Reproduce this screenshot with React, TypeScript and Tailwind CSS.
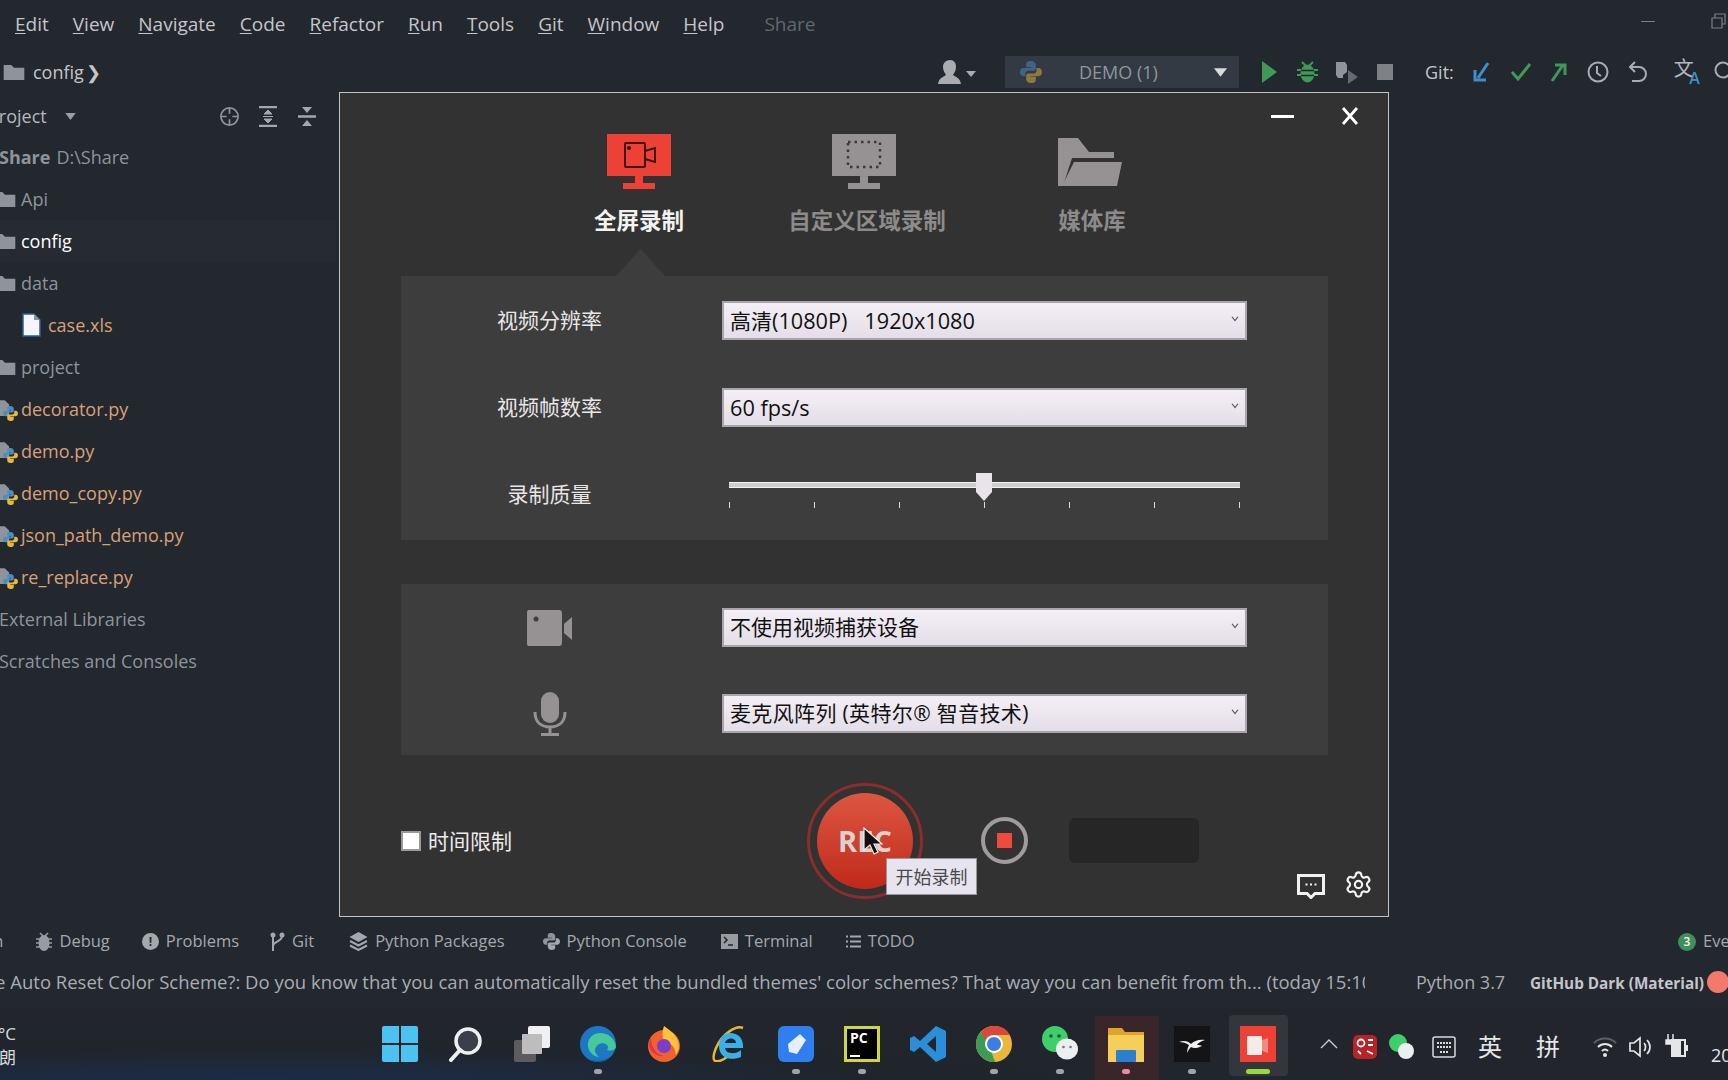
import { Settings } from "lucide-react";

const MENU = ["Edit", "View", "Navigate", "Code", "Refactor", "Run", "Tools", "Git", "Window", "Help"];

const PY_FILES = ["decorator.py", "demo.py", "demo_copy.py", "json_path_demo.py", "re_replace.py"];

function FolderIcon({ className }: { className?: string }) {
  return (
    <svg viewBox="0 0 22 16" className={className}>
      <path d="M0 0h8l3 3h11v13H0z" fill="#8f949c" />
    </svg>
  );
}

function PyLogo({ size = 14 }: { size?: number }) {
  return (
    <svg viewBox="0 0 16 16" width={size} height={size}>
      <path d="M8 0C4.500 0 4.500 1.500 4.500 3v1.500H8.300V5H2.500C1 5 0 6.300 0 8s1 3 2.500 3H4V9c0-1.200 1-2 2-2h4c1 0 1.500-.8 1.500-1.600V3C11.500 1.200 10 0 8 0z" fill="#4a8fc4" />
      <path d="M8 16c3.500 0 3.500-1.500 3.500-3v-1.500H7.700V11h5.800c1.500 0 2.500-1.300 2.500-3s-1-3-2.500-3H12v2c0 1.200-1 2-2 2H6c-1 0-1.500.8-1.500 1.600V13c0 1.800 1.500 3 3.500 3z" fill="#e6b93a" />
    </svg>
  );
}

function PyFileIcon() {
  return (
    <span className="relative ml-[-4px] block h-[24px] w-[25px] shrink-0">
      <svg viewBox="0 0 16 22" className="h-[22px] w-[14px]">
        <path d="M0 2h10l5 5v13H0z" fill="#8d949c" />
      </svg>
      <span className="absolute bottom-0 right-[3px]">
        <PyLogo size={15} />
      </span>
    </span>
  );
}

function TreeRow({ children, active }: { children: React.ReactNode; active?: boolean }) {
  return <div className={`flex h-[42px] items-center text-[18px] ${active ? "bg-[#262a31] text-white" : "text-[#8e949b]"}`}>{children}</div>;
}

function Select({ children }: { children: React.ReactNode }) {
  return (
    <div className="flex h-[39px] items-center justify-between border-2 border-[#a9a5ab] bg-gradient-to-b from-[#f4eef6] to-[#e4dee8] pl-[6px] pr-[6px] text-[21px] leading-none text-[#111]">
      <span className="whitespace-pre">{children}</span>
      <svg viewBox="0 0 10 8" className="mb-[3px] h-[6px] w-[8px]">
        <path d="M1 1l4 5 4-5" fill="none" stroke="#555" strokeWidth="1.600" />
      </svg>
    </div>
  );
}

function ScreenIcon({ active }: { active?: boolean }) {
  const fill = active ? "#ec4134" : "#969293";
  return (
    <svg viewBox="0 0 64 55" className="h-[55px] w-[64px]">
      <path d="M0 0h64v42H0z M28 42h8v8h-8z M16 49h32v6H16z" fill={fill} />
      {active ? (
        <g fill="none" stroke="#3d1512" strokeWidth="2">
          <rect x="18" y="9" width="20" height="24" rx="1" />
          <path d="M38 17l10-3v14l-10-3" />
          <circle cx="22" cy="14" r="1" fill="#3d1512" />
        </g>
      ) : (
        <rect x="16" y="8" width="32" height="25" fill="none" stroke="#3a3838" strokeWidth="2.500" strokeDasharray="2.500 4" />
      )}
    </svg>
  );
}

function OpenFolderIcon() {
  return (
    <svg viewBox="0 0 64 48" className="h-[48px] w-[64px]">
      <path d="M0 0h20l11 14h25v6H14L5 48H0z" fill="#969293" />
      <path d="M16 24h48l-5 24H4z" fill="#969293" />
    </svg>
  );
}

function Tab({ label, active, children }: { label: string; active?: boolean; children: React.ReactNode }) {
  return (
    <div className="flex flex-col items-center">
      <div className="flex h-[55px] items-center">{children}</div>
      <div className={`mt-[17px] text-[22.5px] leading-[30px] ${active ? "font-bold text-[#f2f2f2]" : "font-semibold text-[#8c8a8a]"}`}>{label}</div>
    </div>
  );
}

function Dialog() {
  return (
    <div className="absolute left-[339px] top-[92px] flex h-[825px] w-[1050px] flex-col border border-[#bfc4c6] bg-[#333232] pl-[61px]">
      <div className="flex h-[41px] items-center justify-end pr-[29px] pt-[5px]">
        <div className="h-[3px] w-[23px] bg-white" />
        <svg viewBox="0 0 18 18" className="ml-[47px] h-[18px] w-[18px]">
          <path d="M2 1l14 16M16 1L2 17" stroke="#fff" strokeWidth="2.800" />
        </svg>
      </div>

      <div className="ml-[124px] flex">
        <div className="w-[228px]">
          <Tab label="全屏录制" active>
            <ScreenIcon active />
          </Tab>
        </div>
        <div className="w-[228px]">
          <Tab label="自定义区域录制">
            <div className="pr-[6px]">
              <ScreenIcon />
            </div>
          </Tab>
        </div>
        <div className="w-[222px]">
          <Tab label="媒体库">
            <div className="pr-[5px]">
              <OpenFolderIcon />
            </div>
          </Tab>
        </div>
      </div>

      <div className="relative mt-[40px] h-[264px] w-[927px] bg-[#3e3d3e] pt-[25px]">
        <div className="absolute -top-[27px] left-[215px] h-[27px] w-[49px] bg-[#3e3d3e] [clip-path:polygon(50%_0,100%_100%,0_100%)]" />
        <div className="grid grid-cols-[321px_525px] items-center">
          <div className="pr-[24px] text-center text-[21px] text-[#e8e6e6]">视频分辨率</div>
          <Select>
            高清<span className="text-[21.7px]">(1080P)   1920x1080</span>
          </Select>
        </div>
        <div className="mt-[48px] grid grid-cols-[321px_525px] items-center">
          <div className="pr-[24px] text-center text-[21px] text-[#e8e6e6]">视频帧数率</div>
          <Select>
            <span className="text-[21.7px]">60 fps/s</span>
          </Select>
        </div>
        <div className="mt-[46px] grid grid-cols-[321px_525px]">
          <div className="pr-[24px] pt-[6px] text-center text-[21px] text-[#e8e6e6]">录制质量</div>
          <div className="relative px-[7px] pt-[9px]">
            <div className="h-[6px] border-y border-[#f4f2f2] bg-[#cfcccc]" />
            <svg viewBox="0 0 16 28" className="absolute left-[254px] top-0 h-[28px] w-[16px]">
              <path d="M0 0h16v19l-8 9-8-9z" fill="#e8e4ea" />
            </svg>
            <div className="mt-[14px] flex justify-between">
              {[0, 1, 2, 3, 4, 5, 6].map((t) => (
                <div key={t} className="h-[6px] w-px bg-[#dcdada]" />
              ))}
            </div>
          </div>
        </div>
      </div>

      <div className="mt-[44px] h-[171px] w-[927px] bg-[#3e3d3e] pt-[24px]">
        <div className="grid grid-cols-[321px_525px] items-center">
          <div className="flex justify-center pr-[24px]">
            <svg viewBox="0 0 45 36" className="h-[36px] w-[45px]">
              <path d="M2 0h30a3 3 0 013 3v30a3 3 0 01-3 3H2a2 2 0 01-2-2V2a2 2 0 012-2zM37 14l8-7v23l-8-7z" fill="#969293" />
              <circle cx="9" cy="9" r="2.500" fill="#3e3d3e" />
            </svg>
          </div>
          <Select>不使用视频捕获设备</Select>
        </div>
        <div className="mt-[47px] grid grid-cols-[321px_525px] items-center">
          <div className="flex h-[39px] items-center justify-center pr-[24px]">
            <svg viewBox="0 0 34 44" className="h-[44px] w-[34px] shrink-0">
              <rect x="8" y="0" width="18" height="31" rx="9" fill="#969293" />
              <path d="M2 20c0 10 6 15 15 15s15-5 15-15M17 35v7M8 42.500h18" fill="none" stroke="#969293" strokeWidth="3" />
            </svg>
          </div>
          <Select>
            <span className="tracking-[0.35px]">麦克风阵列 (英特尔® 智音技术)</span>
          </Select>
        </div>
      </div>

      <div className="mt-[28px] flex h-[116px] items-center">
        <div className="flex w-[406px] items-center">
          <div className="h-[20px] w-[20px] border-2 border-[#9a9a9a] bg-white" />
          <span className="ml-[7px] text-[21px] leading-none text-[#ececec]">时间限制</span>
        </div>
        <div className="relative flex h-[116px] w-[116px] shrink-0 items-center justify-center rounded-full border-[3px] border-[#8c2c2c]">
          <div className="flex h-[96px] w-[96px] items-center justify-center rounded-full bg-gradient-to-b from-[#dc5640] to-[#c0281a] text-[29px] font-bold text-[#d9d2cf]">REC</div>
          <svg viewBox="0 0 20 28" className="absolute left-[53px] top-[41px] h-[28px] w-[20px]">
            <path d="M1 1v22l6-5 4 9 4-2-4-8h8z" fill="#111" stroke="#eee" strokeWidth="1.200" />
          </svg>
          <div className="absolute left-[76px] top-[72px] flex h-[37px] w-[91px] items-center justify-center border border-[#9a96a0] bg-[#e7e3ef] text-[18px] leading-none text-[#4a4a4a]">开始录制</div>
        </div>
        <div className="-mt-[2px] ml-[58px] flex h-[47px] w-[47px] shrink-0 items-center justify-center rounded-full border-[4px] border-[#a09c9c]">
          <div className="h-[15px] w-[15px] bg-[#f04a3a]" />
        </div>
        <div className="-mt-[2px] ml-[41px] h-[45px] w-[130px] shrink-0 rounded-[6px] bg-[#262626]" />
        <svg viewBox="0 0 28 25" className="ml-[98px] h-[25px] w-[28px] shrink-0 self-end">
          <path d="M1.500 1.500h25v18H18l-4 4-4-4H1.500z" fill="none" stroke="#f2f2f2" strokeWidth="3" />
          <path d="M8.500 10.500h2M13 10.500h2M17.500 10.500h2" stroke="#f2f2f2" strokeWidth="2" />
        </svg>
        <Settings className="ml-[19px] h-[29px] w-[29px] shrink-0 self-end text-[#f2f2f2]" strokeWidth={1.800} />
      </div>
    </div>
  );
}

function ToolItem({ icon, label, ml }: { icon: React.ReactNode; label: string; ml: string }) {
  return (
    <div className={`flex shrink-0 items-center gap-[7px] ${ml}`}>
      {icon}
      <span>{label}</span>
    </div>
  );
}

function Dock({ children, dot, highlight }: { children: React.ReactNode; dot?: string; highlight?: string }) {
  return (
    <div className="relative flex h-full w-[66px] shrink-0 justify-center pt-[19px]">
      {highlight && <div className={`absolute ${highlight}`} />}
      <div className="relative h-[36px] w-[36px]">{children}</div>
      {dot && <div className={`absolute bottom-[6px] left-1/2 -translate-x-1/2 rounded-full ${dot}`} />}
    </div>
  );
}

export default function App() {
  return (
    <div className="relative flex h-[1080px] w-[1728px] flex-col overflow-hidden bg-[#23272e] font-['Open_Sans','Noto_Sans_CJK_SC',sans-serif] text-[#b4b8bd]">
      {/* menu bar */}
      <div className="flex h-[48px] items-center pl-[15px] text-[19px] text-[#c3c6ca]">
        <div className="flex w-[1626px] shrink-0 gap-[24px]">
          {MENU.map((m) => (
            <span key={m}>
              <span className="underline underline-offset-2">{m[0]}</span>
              {m.slice(1)}
            </span>
          ))}
          <span className="ml-[16px] text-[#62676e]">Share</span>
        </div>
        <div className="mb-[6px] h-px w-[14px] shrink-0 bg-[#7d8187]" />
        <svg viewBox="0 0 16 16" className="mb-[6px] ml-[56px] h-[16px] w-[16px] shrink-0">
          <path d="M1 5h10v10H1zM4 5V1h10v10h-3" fill="none" stroke="#7d8187" strokeWidth="1.200" />
        </svg>
      </div>

      {/* nav bar */}
      <div className="flex h-[48px] items-center text-[18px]">
        <div className="flex w-[938px] shrink-0 items-center">
          <FolderIcon className="ml-[3px] h-[15px] w-[22px]" />
          <span className="ml-[8px] text-[#c3c6ca]">config</span>
          <span className="ml-[2px] text-[#c3c6ca]">❯</span>
        </div>
        <svg viewBox="0 0 38 24" className="h-[24px] w-[38px] shrink-0">
          <path d="M12 0c4 0 6 3 6 7s-2 6-3 8c3 2 7 3 8 9H0c1-6 5-7 8-9-1-2-3-4-3-8s3-7 7-7z" fill="#a9adb2" />
          <path d="M28 11h10l-5 6z" fill="#a9adb2" />
        </svg>
        <div className="ml-[29px] flex h-[32px] w-[234px] shrink-0 items-center bg-[#343a44] pl-[15px] pr-[12px] text-[#8f959c]">
          <span className="opacity-50">
            <PyLogo size={22} />
          </span>
          <span className="ml-[37px] flex-1">DEMO (1)</span>
          <svg viewBox="0 0 12 8" className="h-[9px] w-[13px]">
            <path d="M0 0h12L6 8z" fill="#d8dadc" />
          </svg>
        </div>
        <svg viewBox="0 0 15 22" className="ml-[23px] h-[22px] w-[15px] shrink-0">
          <path d="M0 0l15 11L0 22z" fill="#3f9a55" />
        </svg>
        <svg viewBox="0 0 21 22" className="ml-[20px] h-[22px] w-[21px] shrink-0">
          <ellipse cx="10.500" cy="12.500" rx="7" ry="9" fill="#3f9a55" />
          <path d="M5 1l4 4M16 1l-4 4M0 9h21M0 14h21" stroke="#3f9a55" strokeWidth="2" />
          <path d="M4 9.500h13M4 14.500h13" stroke="#23272e" strokeWidth="1.500" />
        </svg>
        <svg viewBox="0 0 23 24" className="ml-[17px] h-[24px] w-[23px] shrink-0">
          <path d="M1 2h9l2 3v7l-4 3v3H3l-2-3z" fill="#8f949a" />
          <path d="M13 10l10 7-10 7z" fill="#646a70" />
        </svg>
        <div className="ml-[19px] h-[16px] w-[16px] shrink-0 bg-[#7e8185]" />
        <span className="ml-[32px] shrink-0 text-[#c3c6ca]">Git:</span>
        <svg viewBox="0 0 17 20" className="ml-[19px] h-[20px] w-[17px] shrink-0">
          <path d="M15 1L5 16M2 8v10h11" fill="none" stroke="#3d8fc9" strokeWidth="3" />
        </svg>
        <svg viewBox="0 0 22 20" className="ml-[20px] h-[20px] w-[22px] shrink-0">
          <path d="M2 10l6 7L20 2" fill="none" stroke="#3f9a55" strokeWidth="3" />
        </svg>
        <svg viewBox="0 0 18 20" className="ml-[18px] h-[20px] w-[18px] shrink-0">
          <path d="M2 19L13 3M5 3h10v10" fill="none" stroke="#3f9a55" strokeWidth="3" />
        </svg>
        <svg viewBox="0 0 22 22" className="ml-[19px] h-[22px] w-[22px] shrink-0">
          <circle cx="11" cy="11" r="9.500" fill="none" stroke="#a9adb2" strokeWidth="2" />
          <path d="M10 5v7l4 3" fill="none" stroke="#a9adb2" strokeWidth="2" />
        </svg>
        <svg viewBox="0 0 18 22" className="ml-[20px] h-[22px] w-[18px] shrink-0">
          <path d="M6 1L1 6l5 5M1 6h9a6.500 6.500 0 010 14H3" fill="none" stroke="#a9adb2" strokeWidth="2" />
        </svg>
        <span className="relative ml-[27px] h-[27px] w-[26px] shrink-0 text-[20px] leading-none text-[#b4b8bd]">
          文
          <span className="absolute bottom-0 right-0 text-[16px] font-semibold leading-none text-[#3d8fc9]">A</span>
        </span>
        <svg viewBox="0 0 22 22" className="ml-[14px] h-[22px] w-[22px] shrink-0">
          <circle cx="9" cy="9" r="7.500" fill="none" stroke="#a9adb2" strokeWidth="2" />
          <path d="M15 15l6 6" stroke="#a9adb2" strokeWidth="2" />
        </svg>
      </div>

      {/* project tree */}
      <div className="flex-1">
        <div className="w-[336px] text-[18px]">
          <div className="flex h-[40px] items-center text-[#b4b8bd]">
            <span className="-ml-[12px]">Project</span>
            <svg viewBox="0 0 12 8" className="ml-[17px] h-[7px] w-[13px]">
              <path d="M0 0h12L6 8z" fill="#9a9ea4" />
            </svg>
            <svg viewBox="0 0 22 22" className="ml-[142px] h-[21px] w-[21px]">
              <circle cx="11" cy="11" r="9" fill="none" stroke="#8f949a" strokeWidth="1.800" />
              <path d="M11 2v6M11 14v6M2 11h6M14 11h6" stroke="#8f949a" strokeWidth="1.800" />
            </svg>
            <svg viewBox="0 0 18 21" className="ml-[19px] h-[21px] w-[18px]">
              <path d="M0 1h18M0 20h18" stroke="#a4a8ad" strokeWidth="2.500" />
              <path d="M9 4l4 4H5zM9 17l-4-4h8zM4 10.500h10" fill="#a4a8ad" stroke="#a4a8ad" />
            </svg>
            <svg viewBox="0 0 18 21" className="ml-[21px] h-[21px] w-[18px]">
              <path d="M0 10.500h18" stroke="#a4a8ad" strokeWidth="2.500" />
              <path d="M4 1h10l-5 6zM4 20h10l-5-6z" fill="#a4a8ad" />
            </svg>
          </div>
          <TreeRow>
            <span className="-ml-[1px] font-bold">Share</span>
            <span className="ml-[6px]">D:\Share</span>
          </TreeRow>
          <TreeRow>
            <FolderIcon className="-ml-[6px] h-[15px] w-[22px]" />
            <span className="ml-[5px]">Api</span>
          </TreeRow>
          <TreeRow active>
            <FolderIcon className="-ml-[6px] h-[15px] w-[22px]" />
            <span className="ml-[5px]">config</span>
          </TreeRow>
          <TreeRow>
            <FolderIcon className="-ml-[6px] h-[15px] w-[22px]" />
            <span className="ml-[5px]">data</span>
          </TreeRow>
          <TreeRow>
            <svg viewBox="0 0 19 24" className="ml-[22px] h-[24px] w-[19px]">
              <path d="M1 1h11l6 6v16H1z" fill="#f4f6fa" stroke="#2d5f9a" strokeWidth="1.500" />
              <path d="M12 1v6h6" fill="#8d949c" />
            </svg>
            <span className="ml-[7px] text-[#d9a07a]">case.xls</span>
          </TreeRow>
          <TreeRow>
            <FolderIcon className="-ml-[6px] h-[15px] w-[22px]" />
            <span className="ml-[5px]">project</span>
          </TreeRow>
          {PY_FILES.map((f) => (
            <TreeRow key={f}>
              <PyFileIcon />
              <span className="text-[#d9a07a]">{f}</span>
            </TreeRow>
          ))}
          <TreeRow>
            <span className="-ml-[1px]">External Libraries</span>
          </TreeRow>
          <TreeRow>
            <span className="-ml-[1px]">Scratches and Consoles</span>
          </TreeRow>
        </div>
      </div>

      {/* tool windows bar */}
      <div className="flex h-[43px] shrink-0 items-center text-[16.5px] text-[#a4a8ad]">
        <span className="-ml-[27px] shrink-0">Run</span>
        <ToolItem
          ml="ml-[33px]"
          label="Debug"
          icon={
            <svg viewBox="0 0 16 20" className="h-[20px] w-[16px]">
              <ellipse cx="8" cy="11" rx="5.500" ry="8" fill="#989ca1" />
              <path d="M0 7h16M0 11h16M0 15h16M4 1l3 3M12 1L9 4" stroke="#989ca1" strokeWidth="1.600" />
            </svg>
          }
        />
        <ToolItem
          ml="ml-[32px]"
          label="Problems"
          icon={
            <span className="flex h-[17px] w-[17px] items-center justify-center rounded-full bg-[#a4a8ad] text-[12px] font-bold leading-none text-[#23272e]">!</span>
          }
        />
        <ToolItem
          ml="ml-[31px]"
          label="Git"
          icon={
            <svg viewBox="0 0 15 20" className="h-[20px] w-[15px]">
              <circle cx="3" cy="3" r="2.500" fill="#a4a8ad" />
              <circle cx="12" cy="3" r="2.500" fill="#a4a8ad" />
              <path d="M3 3v16M12 4c0 6-9 5-9 10" fill="none" stroke="#a4a8ad" strokeWidth="2" />
            </svg>
          }
        />
        <ToolItem
          ml="ml-[35px]"
          label="Python Packages"
          icon={
            <svg viewBox="0 0 19 19" className="h-[19px] w-[19px]">
              <path d="M9.500 0l9 5-9 5-9-5z" fill="#a4a8ad" />
              <path d="M1 9l8.500 4.500L18 9M1 13.500L9.500 18l8.500-4.500" fill="none" stroke="#a4a8ad" strokeWidth="2" />
            </svg>
          }
        />
        <ToolItem
          ml="ml-[38px]"
          label="Python Console"
          icon={
            <svg viewBox="0 0 16 16" className="h-[17px] w-[17px]">
              <path d="M8 0C4.500 0 4.500 1.500 4.500 3v1.500H8.300V5H2.500C1 5 0 6.300 0 8s1 3 2.500 3H4V9c0-1.200 1-2 2-2h4c1 0 1.500-.8 1.500-1.600V3C11.500 1.200 10 0 8 0z" fill="#8f949a" />
              <path d="M8 16c3.500 0 3.500-1.500 3.500-3v-1.500H7.700V11h5.800c1.500 0 2.500-1.300 2.500-3s-1-3-2.500-3H12v2c0 1.200-1 2-2 2H6c-1 0-1.500.8-1.500 1.600V13c0 1.800 1.500 3 3.500 3z" fill="#a4a8ad" />
            </svg>
          }
        />
        <ToolItem
          ml="ml-[34px]"
          label="Terminal"
          icon={
            <svg viewBox="0 0 17 15" className="h-[15px] w-[17px]">
              <path d="M0 0h17v15H0z" fill="#989ca1" />
              <path d="M3 3l3 3-3 3M7 11h5" fill="none" stroke="#23272e" strokeWidth="1.500" />
            </svg>
          }
        />
        <ToolItem
          ml="ml-[33px]"
          label="TODO"
          icon={
            <svg viewBox="0 0 15 13" className="h-[13px] w-[15px]">
              <path d="M0 1.500h2M4 1.500h11M0 6.500h2M4 6.500h11M0 11.500h2M4 11.500h11" stroke="#a4a8ad" strokeWidth="2" />
            </svg>
          }
        />
        <span className="ml-auto flex shrink-0 items-center">
          <span className="flex h-[18px] w-[18px] items-center justify-center rounded-full bg-[#3f8f5a] text-[12px] font-semibold leading-none text-white">3</span>
          <span className="ml-[7px] w-[25px] overflow-hidden">Eve</span>
        </span>
      </div>

      {/* status bar */}
      <div className="flex h-[44px] shrink-0 items-center pb-[6px] text-[18.5px] text-[#a8adb3]">
        <div className="w-[1365px] shrink-0 overflow-hidden whitespace-nowrap">
          <span className="-ml-[54px] inline-block">Theme Auto Reset Color Scheme?: Do you know that you can automatically reset the bundled themes' color schemes? That way you can benefit from th... (today 15:10)</span>
        </div>
        <span className="ml-[51px] w-[114px] shrink-0 whitespace-nowrap text-[18px]">Python 3.7</span>
        <span className="mt-[3px] shrink-0 whitespace-nowrap text-[15.3px] font-bold text-[#c3c6ca]">GitHub Dark (Material)</span>
        <span className="ml-[3px] h-[22px] w-[22px] shrink-0 rounded-full bg-[#f2796c]" />
      </div>

      {/* taskbar */}
      <div className="flex h-[73px] shrink-0 bg-[radial-gradient(ellipse_at_15%_100%,#1b2c48_0%,#20252c_30%,#22262c_60%)]">
        <div className="w-[367px] shrink-0 pt-[15px] text-[17px] leading-[24px] text-[#d8dadc]">
          <div className="-ml-[2px] whitespace-nowrap">°C</div>
          <div className="-ml-[1px]">朗</div>
        </div>
        <Dock>
          <svg viewBox="0 0 36 36">
            <path d="M0 2a2 2 0 012-2h15v17H0zM19 0h15a2 2 0 012 2v15H19zM0 19h17v17H2a2 2 0 01-2-2zM19 19h17v15a2 2 0 01-2 2H19z" fill="#4cc2f1" />
          </svg>
        </Dock>
        <Dock>
          <svg viewBox="0 0 36 36">
            <circle cx="20" cy="15" r="12" fill="#3a3f4a" stroke="#eef0f2" strokeWidth="3.500" />
            <path d="M12 24L3 34" stroke="#eef0f2" strokeWidth="4" strokeLinecap="round" />
          </svg>
        </Dock>
        <Dock>
          <svg viewBox="0 0 36 36">
            <rect x="0" y="14" width="22" height="22" rx="2" fill="#5c5c5e" />
            <rect x="14" y="0" width="22" height="22" rx="2" fill="#f0f0f2" />
            <rect x="8" y="8" width="20" height="20" rx="1" fill="#bdbdc0" />
          </svg>
        </Dock>
        <Dock dot="h-[5px] w-[8px] bg-[#a0a4a8]">
          <svg viewBox="0 0 36 36">
            <circle cx="18" cy="18" r="18" fill="#1c78c4" />
            <path d="M36 21c-1-9-8-14-16-14-6 0-11 4-12 10-1 7 4 13 11 14-4-3-5-7-3-10 2-4 8-5 11-2 2 2 1 4 0 5 3 1 8 1 9-3z" fill="#45c89a" />
            <path d="M31 30c-3 3-8 6-13 6-4 0-7-1-9-3 6 3 16 2 22-3z" fill="#135a9e" />
          </svg>
        </Dock>
        <Dock>
          <svg viewBox="0 0 36 36">
            <circle cx="18" cy="20" r="16" fill="#f0612e" />
            <path d="M18 0c5 4 14 8 15 20 0 4-2 7-3 9-1-8-5-13-12-12-2-6-2-12 0-17z" fill="#fdc23a" />
            <circle cx="18" cy="20" r="7" fill="#7a3ec8" />
            <path d="M5 12c0 8 4 16 13 18-7 1-14-4-15-11 0-3 1-5 2-7z" fill="#e8304c" />
          </svg>
        </Dock>
        <Dock>
          <svg viewBox="0 0 36 36">
            <path d="M31 2C24-1 10 8 4 22c-2 5-4 11-1 13 3 1 8-1 12-4" fill="none" stroke="#e2b93a" strokeWidth="2.500" />
            <path d="M18 7c8 0 13 5 13 13v2H13c1 6 10 7 16 2v7c-9 4-22 2-22-11C7 12 12 7 18 7zm-5 10h11c0-6-10-6-11 0z" fill="#3bb0e8" />
          </svg>
        </Dock>
        <Dock dot="h-[5px] w-[8px] bg-[#a0a4a8]">
          <svg viewBox="0 0 36 36">
            <rect width="36" height="36" rx="6" fill="#2f7ff0" />
            <path d="M22 8l6 6-9 14-8-2-1-8z" fill="#e6eefc" />
          </svg>
        </Dock>
        <Dock dot="h-[5px] w-[8px] bg-[#a0a4a8]">
          <div className="flex h-[36px] w-[36px] flex-col justify-between border-[3px] border-[#cfd83a] bg-black px-[3px] py-[2px] text-[14px] font-bold leading-none text-white">
            <span>PC</span>
            <span className="h-[2px] w-[10px] bg-white" />
          </div>
        </Dock>
        <Dock>
          <svg viewBox="0 0 36 36">
            <path d="M26 0l10 5v26l-10 5L10 21l-6 5-4-2V12l4-2 6 5zM26 10l-9 8 9 8z" fill="#2a8fd8" fillRule="evenodd" />
          </svg>
        </Dock>
        <Dock dot="h-[5px] w-[8px] bg-[#a0a4a8]">
          <svg viewBox="0 0 36 36">
            <circle cx="18" cy="18" r="18" fill="#e8b83a" />
            <path d="M18 0a18 18 0 0116 9H18a9 9 0 00-9 6L5 6a18 18 0 0113-6z" fill="#d9483a" />
            <path d="M0 18a18 18 0 015-12l9 16 5 14A18 18 0 010 18z" fill="#3f9a55" />
            <circle cx="18" cy="18" r="9" fill="#fff" />
            <circle cx="18" cy="18" r="7" fill="#3a7fe0" />
          </svg>
        </Dock>
        <Dock dot="h-[5px] w-[8px] bg-[#a0a4a8]">
          <svg viewBox="0 0 36 36">
            <ellipse cx="13" cy="13" rx="13" ry="13" fill="#3ecf6a" />
            <ellipse cx="25" cy="23" rx="11" ry="10.500" fill="#eceef0" />
            <circle cx="9" cy="10" r="1.800" fill="#155c2c" />
            <circle cx="17" cy="10" r="1.800" fill="#155c2c" />
            <circle cx="21.500" cy="21" r="1.300" fill="#777" />
            <circle cx="28.500" cy="21" r="1.300" fill="#777" />
          </svg>
        </Dock>
        <Dock dot="h-[5px] w-[8px] bg-[#ec8aa4]" highlight="left-[2px] right-0 top-[9px] bottom-0 bg-[#38262a]">
          <svg viewBox="0 0 36 36">
            <path d="M0 2h14l3 4h19v30H0z" fill="#e0a42a" />
            <path d="M0 9h36v27H0z" fill="#f5cf5a" />
            <rect x="8" y="24" width="20" height="12" rx="1" fill="#2a7fd0" />
          </svg>
        </Dock>
        <Dock dot="h-[5px] w-[8px] bg-[#a0a4a8]">
          <svg viewBox="0 0 36 36">
            <rect width="36" height="36" fill="#141416" />
            <path d="M5 16c5-2 9-1 12 2 3-3 8-5 14-4-4 1-7 3-8 5 2 0 4 0 5 1-4 2-8 3-11 1-2 2-3 4-4 6 0-3 1-6 2-8-3-2-6-3-10-3z" fill="#f0f0f2" />
          </svg>
        </Dock>
        <Dock dot="h-[5px] w-[24px] bg-[#9ad840]" highlight="left-[4px] right-[3px] top-[8px] bottom-[4px] rounded-[4px] bg-[#33363a]">
          <svg viewBox="0 0 36 36">
            <rect width="36" height="36" fill="#ec4134" />
            <rect x="7" y="10" width="15" height="19" rx="1" fill="#f4ecea" />
            <path d="M22 14l6-2v15l-6-2z" fill="#f08a80" />
          </svg>
        </Dock>
        <div className="ml-[29px] flex h-full flex-1 items-start pt-[27px]">
          <svg viewBox="0 0 18 10" className="mt-[5px] h-[10px] w-[18px] shrink-0">
            <path d="M1 9l8-8 8 8" fill="none" stroke="#c8cacc" strokeWidth="1.400" />
          </svg>
          <svg viewBox="0 0 24 24" className="ml-[15px] h-[26px] w-[24px] shrink-0">
            <rect width="24" height="24" rx="5" fill="#b8232a" />
            <circle cx="8" cy="8" r="3.500" fill="none" stroke="#fff" strokeWidth="1.800" />
            <path d="M15 5h5M15 10h5M5 16l3 3M14 16l6 3" stroke="#fff" strokeWidth="1.800" />
          </svg>
          <svg viewBox="0 0 25 25" className="ml-[12px] h-[25px] w-[25px] shrink-0">
            <ellipse cx="9" cy="9" rx="9" ry="9" fill="#3ecf6a" />
            <ellipse cx="17" cy="17" rx="8" ry="8" fill="#eceef0" />
          </svg>
          <svg viewBox="0 0 24 22" className="ml-[18px] mt-[2px] h-[22px] w-[24px] shrink-0">
            <rect x="1" y="1" width="22" height="20" rx="2" fill="none" stroke="#d8dadc" strokeWidth="1.500" />
            <path d="M5 7h14M5 11h14M8 16h8" stroke="#d8dadc" strokeWidth="1.800" strokeDasharray="2 1" />
          </svg>
          <span className="ml-[22px] shrink-0 text-[24px] leading-[26px] text-[#e4e6e8]">英</span>
          <span className="ml-[34px] shrink-0 text-[24px] leading-[26px] text-[#e4e6e8]">拼</span>
          <svg viewBox="0 0 24 22" className="ml-[33px] mt-[2px] h-[22px] w-[24px] shrink-0">
            <path d="M1 7c6-6 16-6 22 0" fill="none" stroke="#5c6066" strokeWidth="2" />
            <path d="M5 11c4-4 10-4 14 0M9 15c2-2 4-2 6 0" fill="none" stroke="#e4e6e8" strokeWidth="2" />
            <circle cx="12" cy="19" r="2" fill="#e4e6e8" />
          </svg>
          <svg viewBox="0 0 24 22" className="ml-[12px] mt-[2px] h-[22px] w-[24px] shrink-0">
            <path d="M1 7h4l6-5v18l-6-5H1z" fill="none" stroke="#e4e6e8" strokeWidth="1.700" />
            <path d="M15 7c2 2 2 6 0 8M18 4c4 4 4 10 0 14" fill="none" stroke="#e4e6e8" strokeWidth="1.700" />
          </svg>
          <svg viewBox="0 0 24 24" className="ml-[12px] h-[24px] w-[24px] shrink-0">
            <path d="M3 0v6M8 0v6M1 6h9v4H1z" stroke="#e4e6e8" strokeWidth="1.500" fill="#e4e6e8" />
            <path d="M7 6h13v16H7z" fill="none" stroke="#e4e6e8" strokeWidth="2" />
            <path d="M8 7h8v14H8z M20 11h3v6h-3z" fill="#e4e6e8" />
          </svg>
          <span className="ml-[22px] mt-[12px] shrink-0 text-[18px] leading-none text-[#e4e6e8]">20</span>
        </div>
      </div>

      <Dialog />
    </div>
  );
}
